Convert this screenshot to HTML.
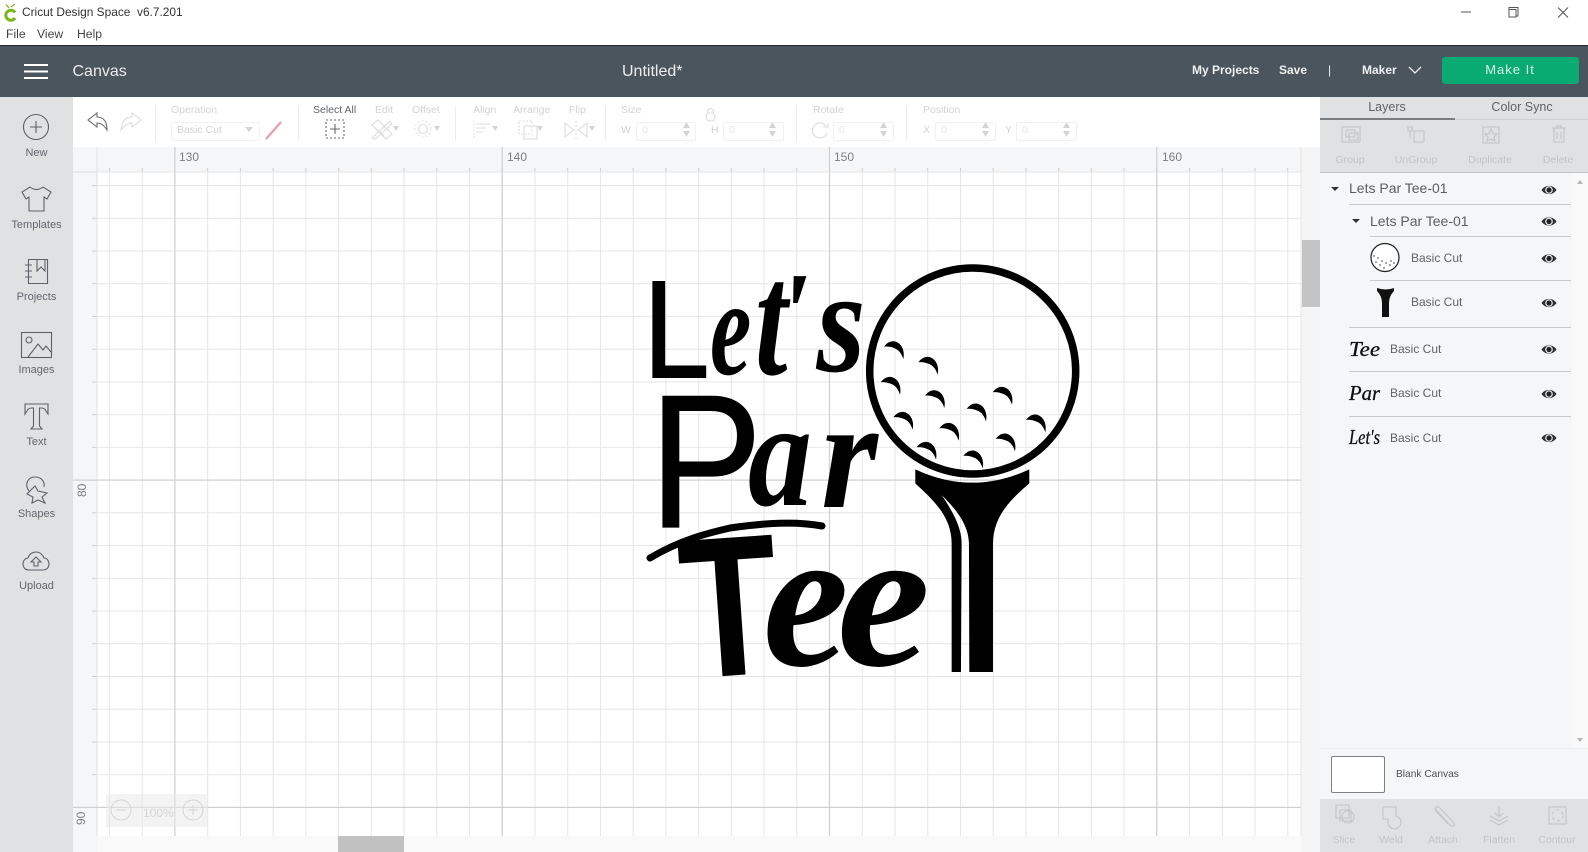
<!DOCTYPE html>
<html lang="en"><head><meta charset="utf-8"><title>Cricut Design Space</title>
<style>
html,body{margin:0;padding:0;width:1588px;height:852px;overflow:hidden;background:#fff;font-family:"Liberation Sans",sans-serif}
.b{position:absolute}
.t{position:absolute;line-height:1;white-space:nowrap}
.c{transform:translateX(-50%)}
.s{font-size:11px;color:#62676d}
.o{font-size:10.5px;color:#d2d3d5}
.z{font-size:10.5px;color:#e4e4e5}
.g{font-size:10.5px;color:#c3c4c6}
.l{font-size:14px;color:#5a5e63}
.k{font-size:12px;color:#5f6367}
.r{font-size:12px;color:#7c7e80}
.inp{position:absolute;height:17px;border:1px solid #f1f1f2;border-radius:2px;top:122px}
svg{position:absolute;left:0;top:0;overflow:visible}
</style></head><body>

<!-- title bar -->
<div class="t" style="left:22px;top:7px;font-size:11.9px;color:#333">Cricut Design Space&nbsp; v6.7.201</div>
<div class="t" style="left:6px;top:28px;font-size:12.2px;color:#444">File</div>
<div class="t" style="left:37px;top:28px;font-size:12.2px;color:#444">View</div>
<div class="t" style="left:77px;top:28px;font-size:12.2px;color:#444">Help</div>

<!-- header -->
<div class="b" style="left:0;top:45px;width:1588px;height:1px;background:#222a30"></div>
<div class="b" style="left:0;top:46px;width:1588px;height:51px;background:#4b555d"></div>
<div class="t" style="left:72.500px;top:64px;font-size:16px;color:#e9ebed">Canvas</div>
<div class="t" style="left:622px;top:64px;font-size:16px;color:#eceeef">Untitled*</div>
<div class="t" style="left:1192px;top:64px;font-size:12px;font-weight:bold;color:#eef0f1">My Projects</div>
<div class="t" style="left:1279px;top:64px;font-size:12px;font-weight:bold;color:#eef0f1">Save</div>
<div class="t" style="left:1328px;top:64px;font-size:12px;color:#eef0f1">|</div>
<div class="t" style="left:1362px;top:64px;font-size:12px;font-weight:bold;color:#eef0f1">Maker</div>
<div class="b" style="left:1442px;top:57px;width:137px;height:27px;background:#0aab72;border-radius:3px"></div>
<div class="t c" style="left:1510px;top:63px;font-size:13px;letter-spacing:1px;color:#d6f6e9">Make It</div>

<!-- left sidebar -->
<div class="b" style="left:0;top:97px;width:73px;height:755px;background:#e0e1e3"></div>

<!-- rulers and canvas bg -->
<div class="b" style="left:73px;top:147px;width:1228px;height:25px;background:#f5f6f7"></div>
<div class="b" style="left:73px;top:172px;width:24px;height:680px;background:#f5f6f7"></div>
<div class="b" style="left:97px;top:836px;width:1204px;height:16px;background:#f9f9fa"></div>
<div class="b" style="left:338px;top:836px;width:66px;height:16px;background:#c1c1c1"></div>
<div class="b" style="left:1301px;top:147px;width:19px;height:705px;background:#f5f5f6"></div>
<div class="b" style="left:1302px;top:240px;width:18px;height:67px;background:#c4c4c4"></div>

<svg width="1588" height="852" viewBox="0 0 1588 852">
<defs>
<pattern id="pv" patternUnits="userSpaceOnUse" x="109" y="0" width="32.73" height="10"><rect width="1" height="10" fill="#e6e6e8"/></pattern>
<pattern id="ph" patternUnits="userSpaceOnUse" x="0" y="479.6" width="10" height="32.73"><rect width="10" height="1" fill="#e6e6e8"/></pattern>
<pattern id="tv" patternUnits="userSpaceOnUse" x="109" y="0" width="32.73" height="10"><rect width="1" height="10" fill="#cfcfd1"/></pattern>
<pattern id="th" patternUnits="userSpaceOnUse" x="0" y="479.6" width="10" height="32.73"><rect width="10" height="1" fill="#cfcfd1"/></pattern>
<path id="dm" d="M0 0C10-14 25-20 38-14C54-7 63 14 58 37C53 21 44 9 32 5C22 1 10-2 0 0Z"/>
<g id="eye"><path d="M-7.500 0C-4-5.500 4-5.500 7.500 0C4 5.500-4 5.500-7.500 0Z" fill="#2e3032"/><circle r="3.800" fill="#eee"/><circle r="2.600" fill="#222"/></g>
</defs>

<!-- grid -->
<rect x="97" y="172" width="1204" height="664" fill="url(#pv)"/>
<rect x="97" y="172" width="1204" height="664" fill="url(#ph)"/>
<rect x="97" y="168" width="1204" height="4" fill="url(#tv)"/>
<rect x="92" y="172" width="5" height="664" fill="url(#th)"/>
<rect x="97" y="171.500" width="1204" height="1" fill="#e4e4e6"/>
<rect x="96.500" y="147" width="1" height="689" fill="#e2e2e4"/>
<rect x="73" y="171.500" width="24" height="1" fill="#dfdfe1"/>
<g fill="#cfcfd1">
<rect x="174.300" y="147" width="1.200" height="689"/><rect x="501.600" y="147" width="1.200" height="689"/><rect x="828.900" y="147" width="1.200" height="689"/><rect x="1156.200" y="147" width="1.200" height="689"/>
<rect x="73" y="479.500" width="1228" height="1.200"/><rect x="73" y="806.800" width="1228" height="1.200"/>
</g>
<rect x="1300.500" y="147" width="1" height="689" fill="#e4e4e6"/>

<!-- zoom widget -->
<rect x="106" y="794" width="102" height="33" fill="#e9e9eb" opacity=".55"/>
<g fill="none" stroke="#d4d4d6" stroke-width="1">
<circle cx="121" cy="810" r="10"/><path d="M116 810H126"/>
<circle cx="193" cy="810" r="10"/><path d="M188 810H198M193 805V815"/>
</g>
<text x="143" y="817" font-family="Liberation Sans" font-size="12" fill="#d4d4d6">100%</text>

<!-- rotated ruler labels -->
<text transform="translate(86,497) rotate(-90)" font-family="Liberation Sans" font-size="12" fill="#7c7e80">80</text>
<text transform="translate(85,825) rotate(-90)" font-family="Liberation Sans" font-size="12" fill="#7c7e80">90</text>

<!-- artwork: words -->
<g font-family="Liberation Sans" font-size="100" fill="#000" stroke="#000" stroke-width="1.500">
<text transform="translate(643.600 377) scale(1.180 1.380)">L</text>
<text stroke-width=".6" transform="translate(649 527) scale(1.700 1.900)">P</text>
<text font-weight="bold" stroke-width="0" transform="rotate(-4 733 530) translate(675 675) scale(1.600 2.000)">T</text>
</g>
<g font-family="Liberation Serif" font-weight="bold" font-style="italic" font-size="100" fill="#000">
<text transform="matrix(.93 0 0 1.38 710 374)">e</text>
<text transform="matrix(1.17 0 0 1.63 755 374)">t</text>
<text transform="matrix(1.1 0 0 1.14 778 351)">'</text>
<text transform="matrix(1.26 0 0 1.47 816.500 371)">s</text>
<text transform="matrix(1.28 0 0 1.51 748 505)">a</text>
<text transform="matrix(1.46 0 0 1.56 821 507)">r</text>
<text transform="matrix(1.93 0 0 2 763 665)">e</text>
<text transform="matrix(2.1 0 0 2 837 665)">e</text>
</g>
<path d="M650 558C680 540 708 533 730 528C765 523 795 521 822 526" fill="none" stroke="#000" stroke-width="7" stroke-linecap="round"/>

<!-- golf ball -->
<circle cx="972.700" cy="371" r="103" fill="none" stroke="#000" stroke-width="7.500"/>
<g transform="translate(850,255) scale(.3333)" fill="#000">
<use href="#dm" x="102" y="275"/><use href="#dm" x="205" y="322"/><use href="#dm" x="92" y="382"/><use href="#dm" x="225" y="422"/>
<use href="#dm" x="428" y="412"/><use href="#dm" x="350" y="462"/><use href="#dm" x="130" y="487"/><use href="#dm" x="268" y="520"/>
<use href="#dm" x="528" y="495"/><use href="#dm" x="437" y="552"/><use href="#dm" x="200" y="577"/><use href="#dm" x="340" y="603"/>
</g>
<!-- tee -->
<g transform="translate(640,460) scale(.3333)">
<path d="M826 28Q997 108 1168 28L1168 70C1110 120 1060 170 1059 250L1059 636L988 636L987 250C985 190 945 145 905 105C935 150 965 200 965 250L963 636L935 636L935 250C935 170 880 120 826 70Z" fill="#000"/>
</g>

<!-- window controls -->
<g fill="none" stroke="#555" stroke-width="1">
<path d="M1461 12H1471"/>
<path d="M1509 10.500V8.500H1518V17H1516M1509 10.500H1516V18H1509Z" transform="translate(0,-1)"/>
<path d="M1558 7.500L1568 17.500M1568 7.500L1558 17.500"/>
</g>
<!-- logo -->
<g fill="none">
<path d="M15 12.500A5 5 0 1 0 15 18" stroke="#7ab51d" stroke-width="3"/>
<path d="M9 8L6 4.500M11 7L15 4" stroke="#7ab51d" stroke-width="1.200"/>
</g>

<!-- hamburger + chevron -->
<g stroke="#fff" stroke-width="2"><path d="M24 65H48M24 71.500H48M24 78H48"/></g>
<path d="M1409 67L1415 73L1421 67" fill="none" stroke="#eef0f1" stroke-width="1.300"/>

<!-- sidebar icons -->
<g fill="none" stroke="#5c6269" stroke-width="1.100">
<circle cx="36" cy="127" r="12.500"/><path d="M36 121V133M30 127H42"/>
<path d="M30 187L22 192L26 199L29 197V211H44V197L47 199L51 192L43 187Q36.500 192 30 187Z"/>
<path d="M28.500 259.500H47.500V283.500H28.500ZM25 265H32M25 271H32M25 277H32M37 259.500V271L41 267L45 271V259.500"/>
<rect x="21.500" y="332.500" width="30" height="25"/><circle cx="29" cy="340" r="3"/><path d="M28 357L38 344L43 350L46 346L51 352"/>
<path d="M25 404H48V414L46 411Q45 408 41 408H39.500V426L42 429H31L33.500 426V408H32Q28 408 27 411L25 414Z"/>
<path d="M29 491C24 484 28 477 35 477C41 477 45 481 44 487M35 486L38 491L47 493L42 497L45 503L38 500L32 503L33 497L27 494Z"/>
<path d="M29 570C24 570 23 566 23 564C23 560 26 558 28 558C29 554 33 552 36 552C40 552 43 555 44 558C47 558 49 561 49 564C49 567 47 570 43 570ZM36 557L31 562H34V566H38V562H41Z"/>
</g>

<!-- toolbar icons -->
<g fill="none" stroke="#66696d" stroke-width="1.100">
<path d="M88 120L97 113V117C103 117 107 121 107 130C104 125 101 123 97 123V127Z"/>
<rect x="326" y="120" width="18" height="18" stroke-dasharray="2 2"/><path d="M335 124V134M330 129H340"/>
</g>
<g fill="none" stroke="#dcdcde" stroke-width="1.100">
<path d="M141 120L132 113V117C126 117 122 121 121 130C125 125 128 123 132 123V127Z"/>
<path d="M372 125L378 120L392 134L386 139ZM372 138L390 121L392 124L375 139ZM378 130L384 136"/>
<circle cx="423" cy="129" r="4.500"/><circle cx="423" cy="129" r="8" stroke-dasharray="1.500 2.500"/>
<path d="M474 121V139" stroke-dasharray="1.500 1.500"/><path d="M476 124H490M476 128H486M476 132H483"/>
<rect x="519" y="121" width="13" height="13" stroke-dasharray="2 1.500"/><rect x="524" y="126" width="13" height="13"/>
<path d="M576 121V139" stroke-dasharray="2 2"/><path d="M565 123L573.500 130L565 137ZM587 123L578.500 130L587 137Z"/>
<rect x="706" y="113" width="9" height="8" rx="4"/><path d="M707.500 113V111Q710.500 106 713.500 111V113"/>
<path d="M826 126A7.500 7.500 0 1 0 827 133M823 127H828V123"/>
<path d="M155.500 106V141M298.500 106V141M455.500 106V141M605.500 106V141M796.500 106V141M906.500 106V141" stroke="#ededee"/>
</g>
<path d="M266 139L281 122" stroke="#e3a5ae" stroke-width="2.400"/>
<g fill="#d4d4d6">
<path d="M245 127H253L249 132ZM393 126H399L396 131ZM434 126H440L437 131ZM492 126H498L495 131ZM537 126H543L540 131ZM589 126H595L592 131Z"/>
<path d="M683 128L686.500 122L690 128ZM683 131H690L686.500 137ZM769 128L772.500 122L776 128ZM769 131H776L772.500 137ZM880 128L883.500 122L887 128ZM880 131H887L883.500 137ZM982 128L985.500 122L989 128ZM982 131H989L985.500 137ZM1063 128L1066.500 122L1070 128ZM1063 131H1070L1066.500 137Z"/>
</g>
</svg>

<!-- ruler labels -->
<div class="t r" style="left:179px;top:151px">130</div>
<div class="t r" style="left:507px;top:151px">140</div>
<div class="t r" style="left:834px;top:151px">150</div>
<div class="t r" style="left:1162px;top:151px">160</div>

<!-- sidebar labels -->
<div class="t s c" style="left:36.500px;top:147.500px">New</div>
<div class="t s c" style="left:36.500px;top:220px">Templates</div>
<div class="t s c" style="left:36.500px;top:292px">Projects</div>
<div class="t s c" style="left:36.500px;top:364.500px">Images</div>
<div class="t s c" style="left:36.500px;top:436.500px">Text</div>
<div class="t s c" style="left:36.500px;top:509px">Shapes</div>
<div class="t s c" style="left:36.500px;top:581px">Upload</div>

<!-- toolbar text -->
<div class="t o" style="left:171px;top:105px">Operation</div>
<div class="inp" style="left:171px;width:87px"></div>
<div class="t o" style="left:177px;top:125px">Basic Cut</div>
<div class="t" style="left:313px;top:105px;font-size:10.500px;color:#5f6367">Select All</div>
<div class="t o" style="left:375px;top:105px">Edit</div>
<div class="t o" style="left:412px;top:105px">Offset</div>
<div class="t o" style="left:473px;top:105px">Align</div>
<div class="t o" style="left:513px;top:105px">Arrange</div>
<div class="t o" style="left:569px;top:105px">Flip</div>
<div class="t o" style="left:621px;top:105px">Size</div>
<div class="t o" style="left:621px;top:125px">W</div>
<div class="inp" style="left:636px;width:58px"></div>
<div class="t z" style="left:642px;top:125px">0</div>
<div class="t o" style="left:711px;top:125px">H</div>
<div class="inp" style="left:723px;width:59px"></div>
<div class="t z" style="left:729px;top:125px">0</div>
<div class="t o" style="left:813px;top:105px">Rotate</div>
<div class="inp" style="left:833px;width:59px"></div>
<div class="t z" style="left:839px;top:125px">0</div>
<div class="t o" style="left:923px;top:105px">Position</div>
<div class="t o" style="left:923px;top:125px">X</div>
<div class="inp" style="left:935px;width:59px"></div>
<div class="t z" style="left:941px;top:125px">0</div>
<div class="t o" style="left:1005px;top:125px">Y</div>
<div class="inp" style="left:1016px;width:59px"></div>
<div class="t z" style="left:1022px;top:125px">0</div>

<!-- right panel -->
<div class="b" style="left:1320px;top:97px;width:268px;height:22px;background:#e0e1e3"></div>
<div class="b" style="left:1320px;top:119px;width:268px;height:1px;background:#cfd0d2"></div>
<div class="b" style="left:1320px;top:118px;width:135px;height:2px;background:#7a7d80"></div>
<div class="b" style="left:1320px;top:120px;width:268px;height:52px;background:#e0e1e3"></div>
<div class="b" style="left:1320px;top:172px;width:268px;height:1px;background:#c4c5c7"></div>
<div class="b" style="left:1320px;top:173px;width:252px;height:575px;background:#f5f6f7"></div>
<div class="b" style="left:1572px;top:173px;width:16px;height:575px;background:#f9f9fa"></div>
<div class="b" style="left:1320px;top:748px;width:268px;height:51px;background:#f5f6f7;border-top:1px solid #eceded;box-sizing:border-box"></div>
<div class="b" style="left:1320px;top:799px;width:268px;height:53px;background:#e0e1e3"></div>
<div class="b" style="left:1331px;top:756px;width:54px;height:37px;background:#fff;border:1px solid #7f7f7f;border-radius:2px;box-sizing:border-box"></div>

<div class="t c" style="left:1387px;top:101px;font-size:12.500px;color:#5f6367">Layers</div>
<div class="t c" style="left:1522px;top:101px;font-size:12.500px;color:#5f6367">Color Sync</div>
<div class="t g c" style="left:1350px;top:154.500px">Group</div>
<div class="t g c" style="left:1416px;top:154.500px">UnGroup</div>
<div class="t g c" style="left:1490px;top:154.500px">Duplicate</div>
<div class="t g c" style="left:1558px;top:154.500px">Delete</div>

<div class="t g c" style="left:1344px;top:834.500px">Slice</div>
<div class="t g c" style="left:1391px;top:834.500px">Weld</div>
<div class="t g c" style="left:1443px;top:834.500px">Attach</div>
<div class="t g c" style="left:1499px;top:834.500px">Flatten</div>
<div class="t g c" style="left:1557px;top:834.500px">Contour</div>
<div class="t" style="left:1396px;top:770px;font-size:10.200px;color:#4c4f52">Blank Canvas</div>

<div class="t l" style="left:1349px;top:181px">Lets Par Tee-01</div>
<div class="t l" style="left:1370px;top:214px">Lets Par Tee-01</div>
<div class="t k" style="left:1411px;top:252px">Basic Cut</div>
<div class="t k" style="left:1411px;top:296px">Basic Cut</div>
<div class="t k" style="left:1390px;top:343px">Basic Cut</div>
<div class="t k" style="left:1390px;top:387px">Basic Cut</div>
<div class="t k" style="left:1390px;top:432px">Basic Cut</div>

<svg width="1588" height="852" viewBox="0 0 1588 852">
<!-- dividers -->
<g stroke="#c9cacc" stroke-width="1" fill="none">
<path d="M1349 204.500H1571M1370 236.500H1571M1370 280.500H1571M1349 327.500H1571M1349 371.500H1571M1349 416.500H1571"/>
</g>
<!-- carets -->
<path d="M1331 187H1339L1335 191ZM1352 219H1360L1356 223Z" fill="#333"/>
<path d="M1577 184L1580 180L1583 184ZM1577 738H1583L1580 742Z" fill="#b5b6b8"/>
<!-- eyes -->
<use href="#eye" x="1549" y="190"/><use href="#eye" x="1549" y="221.500"/><use href="#eye" x="1549" y="258.500"/><use href="#eye" x="1549" y="303"/><use href="#eye" x="1549" y="349.500"/><use href="#eye" x="1549" y="394"/><use href="#eye" x="1549" y="438"/>
<!-- mini ball -->
<circle cx="1385" cy="257.500" r="14" fill="#fff" stroke="#222" stroke-width="1.200"/>
<path d="M1373 256h2M1377 258h2M1381 261h2M1385 263h2M1389 265h2M1375 262h2M1379 265h2M1383 268h2M1390 261h2M1393 263h2" stroke="#555" stroke-width="1"/>
<!-- mini tee -->
<path d="M1377 288Q1385.500 291 1394 288V291Q1389 296 1389 303V317H1382V303Q1382 296 1377 291Z" fill="#111"/>
<!-- mini labels -->
<g font-family="Liberation Serif" font-style="italic" fill="#111" stroke="#111" stroke-width=".3">
<text x="1349" y="356" font-size="21" textLength="31" lengthAdjust="spacingAndGlyphs">Tee</text>
<text x="1349" y="400" font-size="21" textLength="31" lengthAdjust="spacingAndGlyphs">Par</text>
<text x="1349" y="444" font-size="21" textLength="31" lengthAdjust="spacingAndGlyphs">Let's</text>
</g>
<!-- layer tool icons -->
<g fill="none" stroke="#c3c4c6" stroke-width="1.100">
<rect x="1342" y="127" width="18" height="15"/><rect x="1346" y="130" width="9" height="7"/><rect x="1349" y="133" width="9" height="7"/>
<path d="M1408 127H1412V131H1408ZM1414 131H1424V142H1414ZM1410 131V138"/>
<rect x="1483" y="127" width="16" height="16"/><path d="M1491 129L1493 134H1497L1494 137L1495 141L1491 139L1487 141L1488 137L1485 134H1489Z"/>
<path d="M1552 128H1566M1554 128V142H1564V128M1557 132V139M1561 132V139M1557 128V126H1561V128"/>
<path d="M1336 808H1349V821H1336ZM1340 813H1351V824H1340Z" transform="translate(0,-3)"/><circle cx="1348" cy="817" r="6"/>
<path d="M1383 807H1396V816A6.500 6.500 0 1 1 1388 822V819H1383Z"/>
<path d="M1436 810L1450 825C1453 828 1456 825 1453 822L1440 808C1437 805 1434 808 1436 811L1448 824"/>
<path d="M1499 806V817M1495 813L1499 817L1503 813M1490 816L1499 821L1508 816M1490 820L1499 825L1508 820"/>
<rect x="1549" y="807" width="17" height="17"/><circle cx="1557.500" cy="815.500" r="5.500" stroke-dasharray="3 3"/>
</g>
</svg>
</body></html>
